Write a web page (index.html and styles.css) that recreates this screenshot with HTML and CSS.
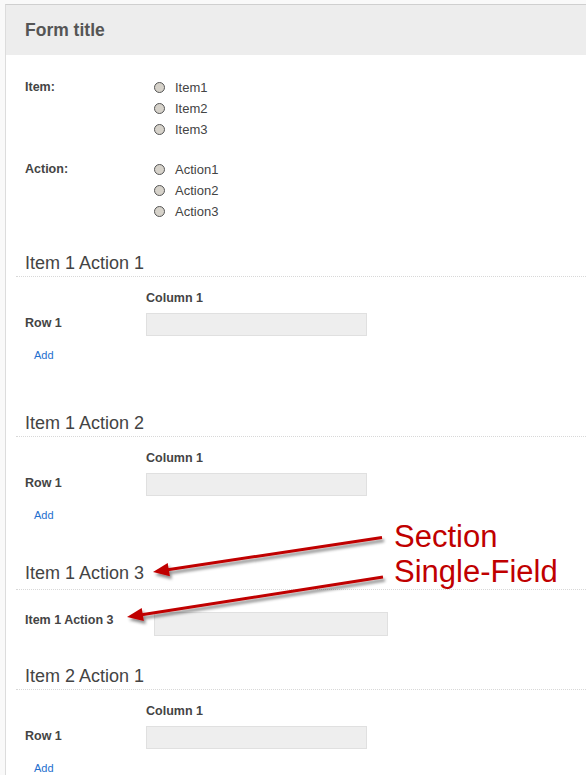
FILE: index.html
```html
<!DOCTYPE html>
<html lang="en">
<head>
<meta charset="utf-8">
<title>Form title</title>
<link rel="stylesheet" href="styles.css">
</head>
<body>
<div class="page">
  <div class="panel">
    <div class="panel-header">Form title</div>
    <div class="panel-body">
      <div class="choice-group first">
        <div class="field-label">Item:</div>
        <div class="options">
          <div class="option"><span class="radio"></span><span class="option-text">Item1</span></div>
          <div class="option"><span class="radio"></span><span class="option-text">Item2</span></div>
          <div class="option"><span class="radio"></span><span class="option-text">Item3</span></div>
        </div>
      </div>
      <div class="choice-group second">
        <div class="field-label">Action:</div>
        <div class="options">
          <div class="option"><span class="radio"></span><span class="option-text">Action1</span></div>
          <div class="option"><span class="radio"></span><span class="option-text">Action2</span></div>
          <div class="option"><span class="radio"></span><span class="option-text">Action3</span></div>
        </div>
      </div>

      <section class="section s1">
        <h2 class="section-title">Item 1 Action 1</h2>
        <div class="matrix">
          <div class="col-head">Column 1</div>
          <div class="row-head">Row 1</div>
          <div class="cell-input"></div>
        </div>
        <a class="add">Add</a>
      </section>

      <section class="section s2">
        <h2 class="section-title">Item 1 Action 2</h2>
        <div class="matrix">
          <div class="col-head">Column 1</div>
          <div class="row-head">Row 1</div>
          <div class="cell-input"></div>
        </div>
        <a class="add">Add</a>
      </section>

      <section class="section s3">
        <h2 class="section-title">Item 1 Action 3</h2>
        <div class="single-field">
          <div class="field-label">Item 1 Action 3</div>
          <div class="single-input"></div>
        </div>
      </section>

      <section class="section s4">
        <h2 class="section-title">Item 2 Action 1</h2>
        <div class="matrix">
          <div class="col-head">Column 1</div>
          <div class="row-head">Row 1</div>
          <div class="cell-input"></div>
        </div>
        <a class="add">Add</a>
      </section>
    </div>
  </div>

  <div class="note note-section">Section</div>
  <div class="note note-field">Single-Field</div>
  <svg class="arrows" width="586" height="775" viewBox="0 0 586 775">
    <defs>
      <filter id="shadow" x="-20%" y="-50%" width="140%" height="200%">
        <feDropShadow dx="2" dy="3" stdDeviation="1.4" flood-color="#000" flood-opacity="0.45"/>
      </filter>
    </defs>
    <g filter="url(#shadow)" fill="#c00000" stroke="#c00000">
      <line x1="382" y1="537.5" x2="166" y2="570" stroke-width="3"/>
      <polygon points="153,572 169.9,576.2 167.7,563" stroke="none"/>
      <line x1="383" y1="577" x2="140" y2="615" stroke-width="3"/>
      <polygon points="127,617 143.9,621.1 141.7,608" stroke="none"/>
    </g>
  </svg>
</div>
</body>
</html>
```

FILE: styles.css
```css
html, body {
  margin: 0;
  padding: 0;
  overflow: hidden;
}

body {
  background: #f9f9f9;
  font-family: "Liberation Sans", Arial, sans-serif;
  color: #444;
}

.page {
  position: relative;
  width: 586px;
  height: 775px;
  padding-top: 4px;
  box-sizing: border-box;
}

.panel {
  margin-left: 5px;
  background: #fff;
  border-top: 1px solid #cfcfcf;
  border-left: 1px solid #dcdcdc;
  min-height: 771px;
  box-sizing: border-box;
}

.panel-header {
  height: 50px;
  line-height: 50px;
  background: #ededed;
  padding-left: 19px;
  font-size: 17.5px;
  font-weight: bold;
  color: #555;
}

.panel-body {
  padding-left: 10px;
  display: flex;
  flex-direction: column;
}

/* radio groups */
.choice-group {
  display: grid;
  grid-template-columns: 129px 1fr;
  padding-left: 9px;
}

.choice-group.first { margin-top: 22px; }
.choice-group.second { margin-top: 19px; }

.field-label {
  font-size: 12.5px;
  font-weight: bold;
  line-height: 21px;
  color: #444;
}

.option {
  display: flex;
  align-items: center;
  height: 21px;
}

.radio {
  width: 9px;
  height: 9px;
  border-radius: 50%;
  border: 1px solid #555;
  background: #d6d2ca;
  flex: none;
}

.option-text {
  margin-left: 10px;
  font-size: 13px;
  line-height: 21px;
  color: #444;
}

/* sections */
.section {
  display: flex;
  flex-direction: column;
}

.section-title {
  margin: 0;
  font-size: 18px;
  font-weight: normal;
  line-height: 24px;
  height: 24px;
  padding: 0 0 1px 9px;
  color: #444;
  border-bottom: 1px dotted #d8d8d8;
}

.s1 .section-title { margin-top: 29px; }
.s2 .section-title { margin-top: 49px; }
.s3 .section-title { margin-top: 39px; padding-bottom: 4px; }
.s4 .section-title { margin-top: 28px; }

.matrix {
  display: grid;
  grid-template-columns: 121px 221px;
  row-gap: 7px;
  margin-top: 13px;
  padding-left: 9px;
}

.col-head {
  grid-column: 2;
  grid-row: 1;
  font-size: 12.5px;
  font-weight: bold;
  line-height: 16px;
  color: #444;
}

.row-head {
  grid-column: 1;
  grid-row: 2;
  align-self: start;
  margin-top: 2px;
  font-size: 12.5px;
  font-weight: bold;
  line-height: 16px;
  color: #444;
}

.cell-input {
  grid-column: 2;
  grid-row: 2;
  height: 21px;
  background: #eeeeee;
  border: 1px solid #e0e0e0;
}

.add {
  margin-top: 12px;
  padding-left: 18px;
  font-size: 11px;
  line-height: 14px;
  color: #1f6fce;
  text-decoration: none;
}

.single-field {
  display: grid;
  grid-template-columns: 129px 234px;
  align-items: start;
  margin-top: 22px;
  padding-left: 9px;
}

.single-field .field-label {
  line-height: 16px;
  margin-top: 0;
}

.single-input {
  height: 22px;
  background: #eeeeee;
  border: 1px solid #e0e0e0;
}

/* annotations */
.note {
  position: absolute;
  left: 394px;
  font-size: 31px;
  line-height: 30px;
  color: #c00000;
  white-space: nowrap;
}

.note-section { top: 522px; }
.note-field { top: 557px; }

.arrows {
  position: absolute;
  left: 0;
  top: 0;
  pointer-events: none;
}
```
